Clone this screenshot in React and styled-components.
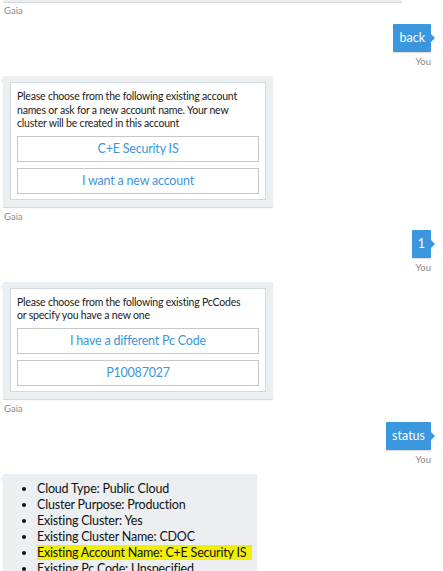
import React from 'react';
import styled, { createGlobalStyle } from 'styled-components';

const Global = createGlobalStyle`
  html, body { margin: 0; padding: 0; background: #ffffff; }
  body {
    font-family: Lato, "Open Sans", sans-serif;
    color: #000000;
    overflow: hidden;
  }
`;

const Chat = styled.div`
  width: 443px;
  height: 571px;
  overflow: hidden;
  box-sizing: border-box;
  padding: 0 12px 0 3px;
  display: flex;
  flex-direction: column;
`;

const Group = styled.div`
  display: flex;
  flex-direction: column;
  align-items: ${p => (p.$user ? 'flex-end' : 'flex-start')};
  margin-top: ${p => p.$gap || 0}px;
  flex-shrink: 0;
`;

const Label = styled.div`
  font-size: 9.5px;
  line-height: 14px;
  color: #8a8a8a;
  margin-top: ${p => p.$top ?? 3}px;
  padding-left: ${p => (p.$user ? 0 : 1)}px;
`;

const BotBubble = styled.div`
  position: relative;
  box-sizing: border-box;
  background: #eceff1;
  width: ${p => p.$w}px;
  height: ${p => (p.$h ? `${p.$h}px` : 'auto')};
  border-radius: 1px;
  box-shadow: 0 1px 1px rgba(0, 0, 0, 0.18);
  padding: ${p => p.$pad || '0'};
  &::before {
    content: '';
    display: ${p => (p.$tail ? 'block' : 'none')};
    position: absolute;
    left: -3px;
    top: 2px;
    border-style: solid;
    border-width: 3px 3px 3px 0;
    border-color: transparent #eceff1 transparent transparent;
  }
`;

const UserBubble = styled.div`
  position: relative;
  box-sizing: border-box;
  height: 28px;
  padding: 0 6px;
  background: #3a96dd;
  color: #ffffff;
  font-size: 12.5px;
  line-height: 28px;
  border-radius: 1px;
  box-shadow: 0 1px 1px rgba(0, 0, 0, 0.15);
  &::after {
    content: '';
    position: absolute;
    right: -4px;
    top: 10px;
    border-style: solid;
    border-width: 4px 0 4px 4px;
    border-color: transparent transparent transparent #3a96dd;
  }
`;

const Card = styled.div`
  background: #ffffff;
  border: 1px solid #d3dbe2;
  padding: 7px 6px 5px 6px;
  display: flex;
  flex-direction: column;
  gap: 6px;
`;

const CardText = styled.div`
  font-size: 10.5px;
  letter-spacing: -0.2px;
  line-height: 13.5px;
  color: #1a1a1a;
  white-space: nowrap;
  margin-bottom: -1px;
`;

const CardButton = styled.button`
  box-sizing: border-box;
  height: 26px;
  width: 100%;
  background: #ffffff;
  border: 1px solid #c8c8c8;
  color: #3a96dd;
  font-family: inherit;
  font-size: 12.5px;
  letter-spacing: -0.2px;
  padding: 0;
  cursor: pointer;
`;

const List = styled.ul`
  margin: 0;
  padding: 7px 0 0 34px;
  font-size: 12.5px;
  letter-spacing: -0.2px;
  line-height: 16px;
  color: #111111;
`;

const Item = styled.li`
  white-space: nowrap;
`;

const Highlight = styled.mark`
  background: #f0f000;
  color: inherit;
  padding-right: 6px;
`;

function Choice({ lines, options }) {
  return (
    <BotBubble $w={270} $pad="6px 7px 7px 7px" $tail>
      <Card>
        <CardText>
          {lines.map((l, i) => (
            <React.Fragment key={i}>
              {l}
              {i < lines.length - 1 && <br />}
            </React.Fragment>
          ))}
        </CardText>
        {options.map(o => (
          <CardButton key={o}>{o}</CardButton>
        ))}
      </Card>
    </BotBubble>
  );
}

export default function App() {
  return (
    <>
      <Global />
      <Chat>
        <Group>
          <BotBubble $w={399} $h={2} />
          <Label $top={2}>Gaia</Label>
        </Group>

        <Group $user $gap={6}>
          <UserBubble>back</UserBubble>
          <Label $user>You</Label>
        </Group>

        <Group $gap={7}>
          <Choice
            lines={[
              'Please choose from the following existing account',
              'names or ask for a new account name. Your new',
              'cluster will be created in this account',
            ]}
            options={['C+E Security IS', 'I want a new account']}
          />
          <Label>Gaia</Label>
        </Group>

        <Group $user $gap={6}>
          <UserBubble>1</UserBubble>
          <Label $user>You</Label>
        </Group>

        <Group $gap={7}>
          <Choice
            lines={[
              'Please choose from the following existing PcCodes',
              'or specify you have a new one',
            ]}
            options={['I have a different Pc Code', 'P10087027']}
          />
          <Label>Gaia</Label>
        </Group>

        <Group $user $gap={6}>
          <UserBubble>status</UserBubble>
          <Label $user>You</Label>
        </Group>

        <Group $gap={7}>
          <BotBubble $w={254} $tail>
            <List>
              <Item>Cloud Type: Public Cloud</Item>
              <Item>Cluster Purpose: Production</Item>
              <Item>Existing Cluster: Yes</Item>
              <Item>Existing Cluster Name: CDOC</Item>
              <Item>
                <Highlight>Existing Account Name: C+E Security IS</Highlight>
              </Item>
              <Item>Existing Pc Code: Unspecified</Item>
              <Item>Requested Account Name: C+E Security IS</Item>
            </List>
          </BotBubble>
        </Group>
      </Chat>
    </>
  );
}
